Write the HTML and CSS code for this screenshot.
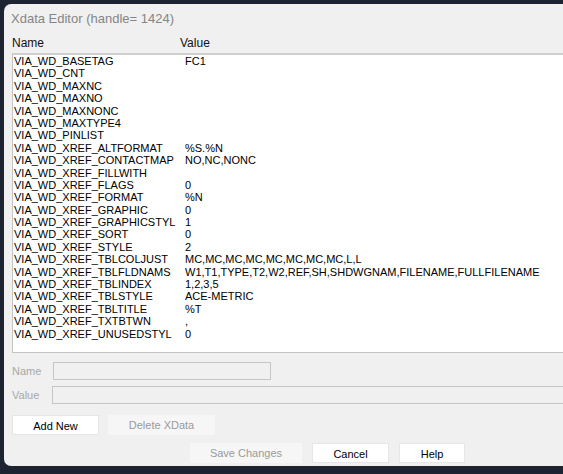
FILE: index.html
```html
<!DOCTYPE html>
<html>
<head>
<meta charset="utf-8">
<link rel="stylesheet" href="styles.css">
</head>
<body>
<div class="window">
  <div class="title">Xdata Editor (handle= 1424)</div>
  <div class="header"><span class="c1">Name</span><span class="c2">Value</span></div>
  <div class="list">
    <div class="row"><span class="c1">VIA_WD_BASETAG</span><span class="c2">FC1</span></div>
    <div class="row"><span class="c1">VIA_WD_CNT</span><span class="c2"></span></div>
    <div class="row"><span class="c1">VIA_WD_MAXNC</span><span class="c2"></span></div>
    <div class="row"><span class="c1">VIA_WD_MAXNO</span><span class="c2"></span></div>
    <div class="row"><span class="c1">VIA_WD_MAXNONC</span><span class="c2"></span></div>
    <div class="row"><span class="c1">VIA_WD_MAXTYPE4</span><span class="c2"></span></div>
    <div class="row"><span class="c1">VIA_WD_PINLIST</span><span class="c2"></span></div>
    <div class="row"><span class="c1">VIA_WD_XREF_ALTFORMAT</span><span class="c2">%S.%N</span></div>
    <div class="row"><span class="c1">VIA_WD_XREF_CONTACTMAP</span><span class="c2">NO,NC,NONC</span></div>
    <div class="row"><span class="c1">VIA_WD_XREF_FILLWITH</span><span class="c2"></span></div>
    <div class="row"><span class="c1">VIA_WD_XREF_FLAGS</span><span class="c2">0</span></div>
    <div class="row"><span class="c1">VIA_WD_XREF_FORMAT</span><span class="c2">%N</span></div>
    <div class="row"><span class="c1">VIA_WD_XREF_GRAPHIC</span><span class="c2">0</span></div>
    <div class="row"><span class="c1">VIA_WD_XREF_GRAPHICSTYL</span><span class="c2">1</span></div>
    <div class="row"><span class="c1">VIA_WD_XREF_SORT</span><span class="c2">0</span></div>
    <div class="row"><span class="c1">VIA_WD_XREF_STYLE</span><span class="c2">2</span></div>
    <div class="row"><span class="c1">VIA_WD_XREF_TBLCOLJUST</span><span class="c2">MC,MC,MC,MC,MC,MC,MC,MC,L,L</span></div>
    <div class="row"><span class="c1">VIA_WD_XREF_TBLFLDNAMS</span><span class="c2">W1,T1,TYPE,T2,W2,REF,SH,SHDWGNAM,FILENAME,FULLFILENAME</span></div>
    <div class="row"><span class="c1">VIA_WD_XREF_TBLINDEX</span><span class="c2">1,2,3,5</span></div>
    <div class="row"><span class="c1">VIA_WD_XREF_TBLSTYLE</span><span class="c2">ACE-METRIC</span></div>
    <div class="row"><span class="c1">VIA_WD_XREF_TBLTITLE</span><span class="c2">%T</span></div>
    <div class="row"><span class="c1">VIA_WD_XREF_TXTBTWN</span><span class="c2">,</span></div>
    <div class="row"><span class="c1">VIA_WD_XREF_UNUSEDSTYL</span><span class="c2">0</span></div>
  </div>
  <div class="field field-name"><span class="label">Name</span><div class="input short"></div></div>
  <div class="field field-value"><span class="label">Value</span><div class="input long"></div></div>
  <div class="btnrow1">
    <div class="btn active add">Add New</div>
    <div class="btn disabled del">Delete XData</div>
  </div>
  <div class="btnrow2">
    <div class="btn disabled save">Save Changes</div>
    <div class="btn active cancel">Cancel</div>
    <div class="btn active help">Help</div>
  </div>
</div>
</body>
</html>
```
FILE: styles.css
```css
html, body {
  margin: 0;
  padding: 0;
  width: 563px;
  height: 474px;
  overflow: hidden;
  background: #1d2331;
}
body {
  font-family: "Liberation Sans", Arial, sans-serif;
  font-size: 11px;
  color: #000;
  padding: 4px 0 0 4px;
  box-sizing: border-box;
}
.window {
  width: 620px;
  height: 462px;
  background: #f0f0f0;
  border-radius: 7px 0 0 7px;
  display: flex;
  flex-direction: column;
  padding-left: 8px;
  box-sizing: border-box;
}
.title {
  font-size: 13px;
  color: #858585;
  height: 13px;
  line-height: 13px;
  margin-top: 8px;
  margin-left: -1px;
}
.header {
  display: flex;
  margin-top: 12px;
  height: 13px;
  line-height: 13px;
  font-size: 12px;
  color: #111;
}
.header .c1 { width: 168px; }
.list {
  margin-top: 3px;
  height: 300px;
  width: 600px;
  background: #fff;
  border: 1px solid #c4c4c4;
  border-top: 2px solid #cfcfcf;
  box-sizing: border-box;
  padding-top: 0;
  padding-left: 1px;
}
.row {
  display: flex;
  height: 12.4px;
  line-height: 12px;
  font-size: 11px;
  white-space: nowrap;
}
.row .c1 { width: 171px; flex: none; }
.field {
  display: flex;
  align-items: center;
  height: 18px;
}
.field-name { margin-top: 9px; }
.field-value { margin-top: 6px; }
.label {
  color: #a8a8a8;
  font-size: 11px;
  flex: none;
}
.field-name .label { width: 41px; }
.field-value .label { width: 40px; }
.input {
  height: 18px;
  box-sizing: border-box;
  border: 1px solid #c6c6c6;
  background: #f0f0f0;
}
.input.short { width: 218px; }
.input.long { width: 560px; }
.btnrow1 {
  display: flex;
  gap: 9px;
  margin-top: 11px;
}
.btnrow2 {
  display: flex;
  gap: 10px;
  margin-top: 8px;
  padding-left: 178px;
}
.btn {
  height: 20px;
  line-height: 20px;
  text-align: center;
  font-size: 11px;
  box-sizing: border-box;
}
.btn.active {
  background: #fff;
  color: #000;
  border: 1px solid #e6e6e6;
}
.btn.disabled {
  background: #f6f6f6;
  color: #9a9a9a;
}
.add { width: 87px; }
.del { width: 107px; }
.save { width: 112px; }
.cancel { width: 77px; }
.help { width: 66px; }
```
